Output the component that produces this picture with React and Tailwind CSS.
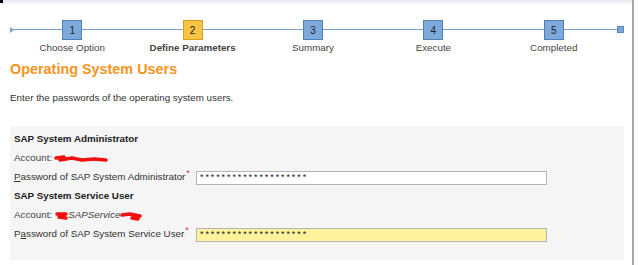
import React from "react";

const steps = [
  { n: 1, label: "Choose Option" },
  { n: 2, label: "Define Parameters", active: true },
  { n: 3, label: "Summary" },
  { n: 4, label: "Execute" },
  { n: 5, label: "Completed" },
];

const Scribble = ({ w, d }) => (
  <svg width={w} height="10" viewBox={`0 0 ${w} 10`} className="shrink-0">
    <path d={d} stroke="#f01010" strokeWidth="3.5" fill="none" strokeLinecap="round" strokeLinejoin="round" />
  </svg>
);

const Required = () => (
  <span className="text-[#e03030] text-[9px] leading-none relative -top-[4px] ml-[1px]">*</span>
);

const PasswordRow = ({ children, yellow }) => (
  <div className="h-[19px] flex items-center">
    <div className="w-[182px] shrink-0 whitespace-nowrap text-[#333]">{children}</div>
    <div
      className={`w-[351px] h-[14px] border border-[#b4b4b4] flex items-center pl-[3px] text-[9px] tracking-[1.9px] text-[#222] ${
        yellow ? "bg-[#fff29c]" : "bg-white"
      }`}
    >
      ********************
    </div>
  </div>
);

export default function App() {
  return (
    <div
      className="w-[638px] h-[265px] bg-white overflow-hidden text-[9.8px]"
      style={{ fontFamily: '"Liberation Sans", Arial, sans-serif' }}
    >
      <div className="w-[634px] h-full border-r-2 border-[#a8a8a8] relative">
        {/* top band */}
        <div className="h-[6px] bg-gradient-to-b from-[#e4e9f0] to-white" />
        <div className="absolute top-0 left-0 w-[3px] h-[3px] bg-black" />

        {/* stepper */}
        <div className="relative mt-[14px] h-[37px]">
          <div className="absolute left-[10px] w-[610px] top-[9px] h-px bg-[#7fa2cc]" />
          <div className="absolute left-[10px] top-[7px] w-0 h-0 border-y-[3px] border-y-transparent border-l-[4px] border-l-[#7fa2cc]" />
          <div className="absolute left-[617px] top-[6px] w-[7px] h-[7px] bg-[#7aa6d8] border border-[#5d88bb]" />
          <div className="relative flex pl-[12px]">
            {steps.map((s) => (
              <div key={s.n} className="w-[120.4px] flex flex-col items-center">
                <div
                  className={`w-[20px] h-[20px] flex items-center justify-center text-[10px] text-[#222] border ${
                    s.active ? "bg-[#f8c443] border-[#d99e1e]" : "bg-[#7eaadb] border-[#4f7fb5]"
                  }`}
                >
                  {s.n}
                </div>
                <div
                  className={`mt-[1px] leading-[13px] text-[#444] ${s.active ? "font-bold text-[#222]" : ""}`}
                >
                  {s.label}
                </div>
              </div>
            ))}
          </div>
        </div>

        {/* title */}
        <div className="pl-[10px] mt-[3px] text-[#f7941d] font-bold text-[14.4px] leading-[18px]">
          Operating System Users
        </div>
        <div className="pl-[10px] mt-[13px] text-[#333] leading-[13px]">
          Enter the passwords of the operating system users.
        </div>

        {/* panel */}
        <div className="ml-[10px] mr-[8px] mt-[22px] h-[134px] bg-[#f5f5f5] pl-[4px] pt-[4px]">
          <div className="h-[19px] flex items-center font-bold text-[#222]">SAP System Administrator</div>
          <div className="h-[19px] flex items-center text-[#444]">
            <span>Account:</span>
            <span className="ml-[2px]">
              <Scribble w={54} d="M2 4 L10 3 L6 6 L18 4 L28 6 L40 5 L52 6" />
            </span>
          </div>
          <PasswordRow>
            <span className="underline">P</span>assword of SAP System Administrator
            <Required />
          </PasswordRow>
          <div className="h-[19px] flex items-center font-bold text-[#222]">SAP System Service User</div>
          <div className="h-[19px] flex items-center text-[#444]">
            <span>Account:</span>
            <span className="ml-[3px]">
              <Scribble w={13} d="M2 3 L11 3 L4 6 L11 7" />
            </span>
            <span className="italic">SAPService</span>
            <Scribble w={22} d="M2 4 L10 3 L20 5 L12 7 L18 8" />
          </div>
          <PasswordRow yellow>
            P<span className="underline">a</span>ssword of SAP System Service User
            <Required />
          </PasswordRow>
        </div>
      </div>
    </div>
  );
}
